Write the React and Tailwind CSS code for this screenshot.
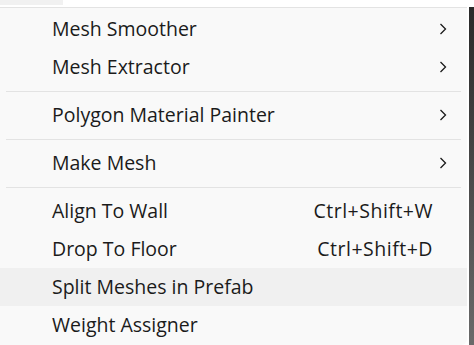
import React from 'react';

const groups = [
  [
    { label: 'Mesh Smoother', sub: true },
    { label: 'Mesh Extractor', sub: true },
  ],
  [{ label: 'Polygon Material Painter', sub: true }],
  [{ label: 'Make Mesh', sub: true }],
  [
    { label: 'Align To Wall', shortcut: 'Ctrl+Shift+W' },
    { label: 'Drop To Floor', shortcut: 'Ctrl+Shift+D' },
    { label: 'Split Meshes in Prefab', active: true },
    { label: 'Weight Assigner' },
  ],
];

function Chevron() {
  return (
    <svg width="8" height="12" viewBox="0 0 8 12" className="text-[#1b1b1b]">
      <path d="M1.5 1 L6.5 6 L1.5 11" fill="none" stroke="currentColor" strokeWidth="1.3" />
    </svg>
  );
}

function Row({ item }) {
  return (
    <div
      className={`h-[38px] flex items-center pl-[52px] pr-[20px] ${
        item.active ? 'bg-[#f0f0f0]' : ''
      }`}
    >
      <span className="flex-1">{item.label}</span>
      {item.shortcut && <span className="pr-[14px] tracking-[0.5px]">{item.shortcut}</span>}
      {item.sub && <Chevron />}
    </div>
  );
}

export default function App() {
  return (
    <div
      className="w-[474px] h-[345px] bg-white flex flex-col overflow-hidden text-[#1b1b1b] text-[19.5px]"
      style={{ fontFamily: '"Open Sans", "Noto Sans", sans-serif' }}
    >
      {/* strip above the menu */}
      <div className="h-[7px] shrink-0 flex">
        <div className="w-[63px] h-[5px] bg-[#f1f1f1]" />
      </div>

      <div className="flex flex-1">
        {/* MENU */}
        <div className="w-[467px] bg-[#f9f9f9] border-t border-[#e3e3e3] pt-[2px] rounded-br-[6px]">
          {groups.map((g, gi) => (
            <div key={gi}>
              {gi > 0 && (
                <div className="h-[10px] flex items-center pl-[6px] pr-[6px]">
                  <div className="h-px w-full bg-[#e3e3e3]" />
                </div>
              )}
              {g.map((item) => (
                <Row key={item.label} item={item} />
              ))}
            </div>
          ))}
        </div>

        {/* window edge behind */}
        <div className="w-[2px] bg-white" />
        <div className="flex-1 bg-gradient-to-b from-[#2a2a2a] via-[#4a4a4a] to-[#6a6a6a]" />
      </div>
    </div>
  );
}
